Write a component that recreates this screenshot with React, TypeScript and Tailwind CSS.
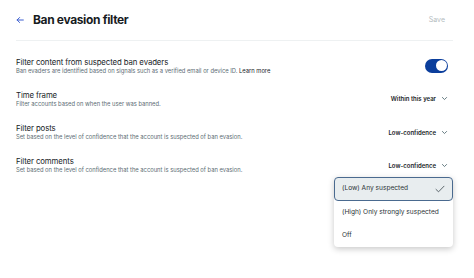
import React, { useState } from 'react';

const rows = [
  { id: 'time', title: 'Time frame', desc: 'Filter accounts based on when the user was banned.', value: 'Within this year' },
  { id: 'posts', title: 'Filter posts', desc: 'Set based on the level of confidence that the account is suspected of ban evasion.', value: 'Low-confidence' },
  { id: 'comments', title: 'Filter comments', desc: 'Set based on the level of confidence that the account is suspected of ban evasion.', value: 'Low-confidence' },
];

const options = ['(Low) Any suspected', '(High) Only strongly suspected', 'Off'];

function Chevron() {
  return (
    <svg width="7" height="7" viewBox="0 0 10 10" fill="none" stroke="#576f76" strokeWidth="1.3" strokeLinecap="round" strokeLinejoin="round">
      <path d="M2 3.5 5 6.5 8 3.5" />
    </svg>
  );
}

export default function App() {
  const [enabled, setEnabled] = useState(true);

  return (
    <div className="w-[474px] h-[278px] bg-white overflow-hidden text-[#181c1f]" style={{ fontFamily: 'Inter, "Noto Sans", sans-serif' }}>
      {/* Header */}
      <header className="flex items-center justify-between pl-[15px] pr-[29px] pt-[10px] h-[30px]">
        <div className="flex items-center gap-[8px]">
          <svg width="10" height="10" viewBox="0 0 12 12" fill="none" stroke="#3c5fd0" strokeWidth="1.2" strokeLinecap="round" strokeLinejoin="round">
            <path d="M10 6H2.5M5.5 3 2.5 6l3 3" />
          </svg>
          <h1 className="text-[12px] font-bold leading-none tracking-[-0.35px]">Ban evasion filter</h1>
        </div>
        <span className="text-[7px] text-[#b4bcc0]">Save</span>
      </header>
      <div className="mx-[16px] mt-[10px] border-t border-[#eef1f2] w-[437px]" />

      <main className="relative pl-[16px] pr-[26px] pt-[16px]">
        {/* Toggle row */}
        <div className="flex items-center justify-between h-[17px]">
          <div>
            <div className="text-[7.8px] leading-[10px] tracking-[-0.1px]">Filter content from suspected ban evaders</div>
            <div className="text-[5.8px] leading-[8px] text-[#5c6c74]">
              Ban evaders are identified based on signals such as a verified email or device ID. <span className="text-[#181c1f]">Learn more</span>
            </div>
          </div>
          <button
            onClick={() => setEnabled(!enabled)}
            className="w-[23px] h-[14px] rounded-full bg-[#0b3e9c] flex items-center justify-end p-[1.5px]"
          >
            <span className="w-[11px] h-[11px] rounded-full bg-white" />
          </button>
        </div>

        {rows.map((row) => (
          <div key={row.id} className="flex items-center justify-between mt-[16.3px] h-[17px]">
            <div>
              <div className="text-[7.8px] leading-[10px] tracking-[-0.1px]">{row.title}</div>
              <div className="text-[5.8px] leading-[8px] text-[#5c6c74]">{row.desc}</div>
            </div>
            <div className="flex items-center gap-[5px] text-[6px] font-semibold">
              {row.value}
              <Chevron />
            </div>
          </div>
        ))}

        {/* Dropdown menu */}
        <div className="absolute left-[334px] top-[136px] w-[119px] bg-white rounded-[4px] shadow-[0_2px_6px_rgba(0,0,0,0.22)] text-[6.6px] text-[#2a3236] whitespace-nowrap">
          {options.map((opt, i) => (
            <div
              key={opt}
              className={
                i === 0
                  ? 'flex items-center justify-between h-[24px] px-[7px] bg-[#e8edef] border border-[#4a6a8f] rounded-[4px]'
                  : 'flex items-center h-[23px] px-[8px]'
              }
            >
              {opt}
              {i === 0 && (
                <svg width="10" height="8" viewBox="0 0 12 10" fill="none" stroke="#3a464c" strokeWidth="1" strokeLinecap="round" strokeLinejoin="round">
                  <path d="M1 5.5 4.2 8.5 11 1.5" />
                </svg>
              )}
            </div>
          ))}
        </div>
      </main>
    </div>
  );
}
